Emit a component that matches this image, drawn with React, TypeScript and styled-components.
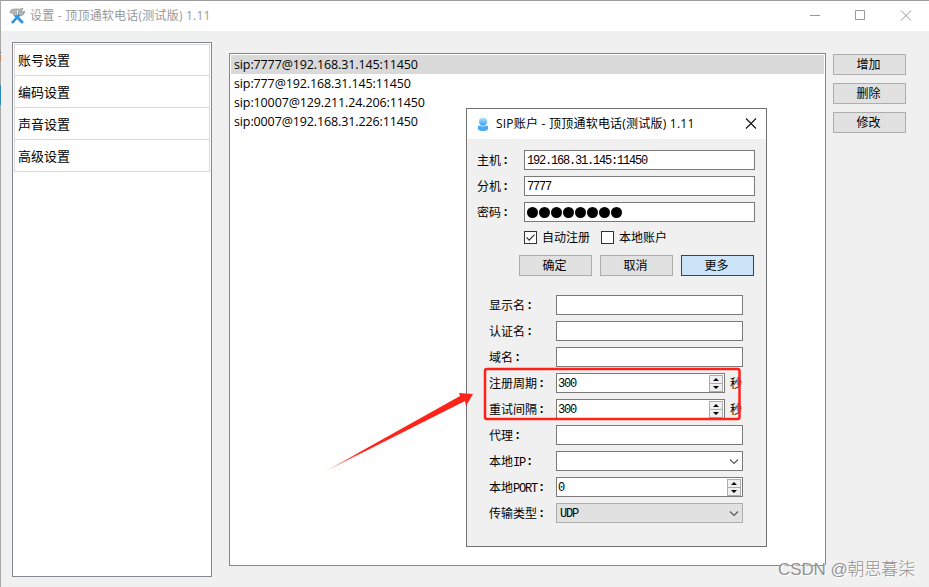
import React from "react";
import styled, { createGlobalStyle } from "styled-components";

const ui = '"Open Sans", "Noto Sans CJK SC", sans-serif';
const song = '"Liberation Mono", "Noto Sans CJK SC", monospace';

const GlobalStyle = createGlobalStyle`
  * { box-sizing: border-box; }
  body { margin: 0; background: #f0f0f0; overflow: hidden; }
`;

const Window = styled.div`
  position: relative;
  width: 929px;
  height: 587px;
  display: flex;
  flex-direction: column;
  background: #f0f0f0;
  border-top: 1px solid #9c9c9c;
  border-left: 1px solid #a9a9a9;
  color: #000;
  font: 12px/19px ${ui};
  white-space: nowrap;
`;

const TitleBar = styled.header`
  display: flex;
  align-items: center;
  height: 30px;
  flex: none;
  padding-left: 8px;
  background: #fff;
  color: #999;
`;

const TitleText = styled.span<{ $spacing?: number; $left?: number }>`
  flex: 1;
  font: 12px/20px ${ui};
  letter-spacing: ${(p) => p.$spacing ?? 0.22}px;
  margin-left: ${(p) => p.$left ?? 5}px;
`;

const Controls = styled.svg`
  width: 121px;
  height: 30px;
  flex: none;
`;

const Content = styled.main`
  display: flex;
  align-items: flex-start;
  padding: 11px 0 0 11px;
`;

const Sidebar = styled.nav`
  width: 200px;
  height: 535px;
  flex: none;
  padding: 1px;
  background: #fff;
  border: 1px solid #828790;
`;

const SideItem = styled.div`
  height: 32px;
  padding: 2px 0 0 3px;
  border: 1px solid #d9d9d9;
  border-top-width: 0;
  font: 13px/28px ${ui};
  &:first-child { padding-top: 1px; border-top-width: 1px; }
`;

const AccountList = styled.div`
  width: 597px;
  height: 513px;
  margin: 11px 7px 0 17px;
  flex: none;
  background: #fff;
  border: 1px solid #828790;
  padding: 1px;
`;

const Account = styled.div<{ $selected?: boolean }>`
  height: 19px;
  padding-left: 3px;
  font: 12.5px/20px ${ui};
  letter-spacing: -0.12px;
  background: ${(p) => (p.$selected ? "#d9d9d9" : "transparent")};
`;

const Actions = styled.div`
  display: flex;
  flex-direction: column;
  gap: 8px;
  margin-top: 12px;
`;

const Button = styled.button<{ $primary?: boolean }>`
  display: flex;
  justify-content: center;
  align-items: flex-start;
  width: 73px;
  height: 21px;
  padding: 3px 2px 0 0;
  border: 1px solid ${(p) => (p.$primary ? "#00549a" : "#adadad")};
  background: ${(p) => (p.$primary ? "#cce4f7" : "#e1e1e1")};
  color: #000;
  font: 12px/16px ${song};
`;

const Dialog = styled.section`
  position: absolute;
  left: 465px;
  top: 107px;
  width: 301px;
  height: 439px;
  background: #f0f0f0;
  border: 1px solid #707070;
  font: 12px/20px ${song};
`;

const DialogTitle = styled(TitleBar)`
  padding-left: 10px;
  color: #000;
`;

const Form = styled.div<{ $more?: boolean }>`
  display: grid;
  grid-template-columns: ${(p) => (p.$more ? "67px 187px" : "47px 231px")};
  grid-auto-rows: 20px;
  row-gap: 6px;
  padding: ${(p) => (p.$more ? "19px 0 0 22px" : "11px 0 0 10px")};
`;

const Label = styled.label`
  display: flex;
  padding-top: 2px;
`;

const Latin = styled.span`
  font: 12px/20px ${song};
  letter-spacing: -1.2px;
`;

const Colon = styled.span`
  width: 6px;
  padding-left: 1px;
  font: bold 12px/19px ${song};
`;

const Field = styled.div<{ $width?: number; $muted?: boolean }>`
  display: flex;
  align-items: center;
  justify-content: space-between;
  width: ${(p) => (p.$width ? `${p.$width}px` : "100%")};
  height: 20px;
  padding: 0 1px 0 2px;
  border: 1px solid ${(p) => (p.$muted ? "#adadad" : "#7a7a7a")};
  background: ${(p) => (p.$muted ? "#e1e1e1" : "#fff")};
`;

const Value = styled.span<{ $left?: number }>`
  padding-top: 2px;
  margin-left: ${(p) => p.$left ?? 0}px;
  font: 12px/16px ${song};
  letter-spacing: -1.2px;
`;

const FieldWithUnit = styled.div`
  display: flex;
  gap: 5px;
  overflow: hidden;
`;

const Unit = styled.span`
  padding-top: 2px;
`;

const Spacer = styled.span`
  flex: 1;
`;

const Checks = styled.div`
  display: flex;
  align-items: center;
  height: 13px;
  margin: 9px 0 0 57px;
`;

const CheckLabel = styled.label`
  margin: 4px 11px 0 5px;
  line-height: 13px;
`;

const DialogButtons = styled.div`
  display: flex;
  gap: 8px;
  margin: 11px 0 0 52px;
`;

const Art = styled.svg`
  display: block;
  flex: none;
`;

const Annotation = styled.svg`
  position: absolute;
  left: -1px;
  top: -1px;
  pointer-events: none;
`;

const Watermark = styled.div`
  position: absolute;
  left: 777px;
  top: 557px;
  font: 17px/24px "Liberation Sans", "Noto Sans CJK SC", sans-serif;
  font-weight: 300;
  letter-spacing: -0.1px;
  color: #929292;
  text-shadow: 1px 1px 0 #fff;
`;

const ToolsIcon = () => (
  <Art width="16" height="16" viewBox="0 0 16 16">
    <path d="M3 15 11 6" stroke="#258bd2" strokeWidth="2.6" />
    <path d="m6 7 7 7" stroke="#3298df" strokeWidth="3" strokeLinecap="round" />
    <path d="m1 5 1-3 3-1h5l-3 2 1 3-2 2-3-3Z" fill="#b5b8b9" stroke="#8f9699" strokeWidth=".7" />
    <path d="m10 7-1-3 2-3 3-.5-2 2.5 1 1 2.5-1-.5 3-3 2Z" fill="#aeb3b5" stroke="#858e92" strokeWidth=".7" />
    <path d="m2.5 14 4-4.5" stroke="#75c3f4" />
  </Art>
);

const PersonIcon = () => (
  <Art width="12" height="15" viewBox="0 0 12 15">
    <defs>
      <linearGradient id="person" x2="0" y2="1">
        <stop stopColor="#bce8fc" />
        <stop offset="1" stopColor="#369df0" />
      </linearGradient>
    </defs>
    <path d="M1 9Q6 7 11 9V12Q10 14 6 14T1 12Z" fill="#4aaaf4" />
    <circle cx="6" cy="4.5" r="4" fill="url(#person)" />
    <path d="M2 8Q6 10.5 10 8" fill="none" stroke="#dff5ff" strokeWidth=".8" />
  </Art>
);

const CloseIcon = () => (
  <Art width="31" height="29" viewBox="0 0 31 29">
    <path d="m11 8.5 10 10m0-10-10 10" stroke="#111" strokeWidth="1.1" />
  </Art>
);

const Checkbox = ({ checked = false }) => (
  <Art width="13" height="13">
    <rect x=".5" y=".5" width="12" height="12" fill="#fff" stroke="#333" />
    {checked && <path d="m2.5 6.3 2.7 2.8 5.3-5.4" fill="none" stroke="#333" strokeWidth="1.2" />}
  </Art>
);

const Spinner = () => (
  <Art width="14" height="17">
    <rect x=".5" y=".5" width="13" height="8" fill="#f0f0f0" stroke="#acacac" />
    <rect x=".5" y="8.5" width="13" height="8" fill="#f0f0f0" stroke="#acacac" />
    <path d="M4 6h6L7 3ZM4 11h6l-3 3Z" fill="#000" />
  </Art>
);

const Chevron = () => (
  <Art width="14" height="18">
    <path d="m3 7.5 4 4 4-4" fill="none" stroke="#555" strokeWidth="1.1" />
  </Art>
);

const PasswordDots = () => (
  <Art width="96" height="18">
    {Array.from({ length: 8 }, (_, i) => (
      <circle key={i} cx={5.5 + i * 12} cy="9.5" r="5.5" />
    ))}
  </Art>
);

const FormLabel = ({ text, latin }: { text: string; latin?: string }) => (
  <Label>
    {text}
    {latin && <Latin>{latin}</Latin>}
    <Colon>:</Colon>
  </Label>
);

const sections = ["账号设置", "编码设置", "声音设置", "高级设置"];
const accounts = [
  "sip:7777@192.168.31.145:11450",
  "sip:777@192.168.31.145:11450",
  "sip:10007@129.211.24.206:11450",
  "sip:0007@192.168.31.226:11450",
];

export default function App() {
  return (
    <Window>
      <GlobalStyle />
      <TitleBar>
        <ToolsIcon />
        <TitleText>设置 - 顶顶通软电话(测试版) 1.11</TitleText>
        <Controls>
          <path d="M2 14.5h10M47.5 9.5h9v9h-9ZM93 9.5l10 10m0-10-10 10" fill="none" stroke="#999" />
        </Controls>
      </TitleBar>
      <Content>
        <Sidebar>
          {sections.map((name) => (
            <SideItem key={name}>{name}</SideItem>
          ))}
        </Sidebar>
        <AccountList>
          {accounts.map((account, i) => (
            <Account key={account} $selected={i === 0}>{account}</Account>
          ))}
        </AccountList>
        <Actions>
          <Button>增加</Button>
          <Button>删除</Button>
          <Button>修改</Button>
        </Actions>
      </Content>

      <Dialog>
        <DialogTitle>
          <PersonIcon />
          <TitleText $left={7}>SIP账户 - 顶顶通软电话(测试版) 1.11</TitleText>
          <CloseIcon />
        </DialogTitle>
        <Form>
          <FormLabel text="主机" />
          <Field><Value>192.168.31.145:11450</Value></Field>
          <FormLabel text="分机" />
          <Field><Value>7777</Value></Field>
          <FormLabel text="密码" />
          <Field><PasswordDots /></Field>
        </Form>
        <Checks>
          <Checkbox checked />
          <CheckLabel>自动注册</CheckLabel>
          <Checkbox />
          <CheckLabel>本地账户</CheckLabel>
        </Checks>
        <DialogButtons>
          <Button>确定</Button>
          <Button>取消</Button>
          <Button $primary>更多</Button>
        </DialogButtons>
        <Form $more>
          <FormLabel text="显示名" />
          <Field />
          <FormLabel text="认证名" />
          <Field />
          <FormLabel text="域名" />
          <Field />
          <FormLabel text="注册周期" />
          <FieldWithUnit>
            <Field $width={169}><Value $left={-1}>300</Value><Spinner /></Field>
            <Unit>秒</Unit>
          </FieldWithUnit>
          <FormLabel text="重试间隔" />
          <FieldWithUnit>
            <Field $width={169}><Value $left={-1}>300</Value><Spinner /></Field>
            <Unit>秒</Unit>
          </FieldWithUnit>
          <FormLabel text="代理" />
          <Field />
          <FormLabel text="本地" latin="IP" />
          <Field><Spacer /><Chevron /></Field>
          <FormLabel text="本地" latin="PORT" />
          <Field><Value $left={-1}>0</Value><Spinner /></Field>
          <FormLabel text="传输类型" />
          <Field $muted><Value $left={1}>UDP</Value><Chevron /></Field>
        </Form>
      </Dialog>

      <Annotation width="929" height="587">
        <defs>
          <linearGradient id="arrow">
            <stop stopColor="#ff2419" stopOpacity=".3" />
            <stop offset=".25" stopColor="#ff2419" />
          </linearGradient>
        </defs>
        <path d="M0 52h1v1H0Z" fill="#555" />
        <path d="M0 55h1v6H0Z" fill="#b9855f" />
        <path d="M0 85h1v20H0Z" fill="#2a86b8" />
        <path d="M324 472 460 396 459 393 473 394 466 406 465 401Z" fill="url(#arrow)" />
        <rect x="485" y="369" width="254.5" height="50" rx="2" fill="none" stroke="#ff2118" strokeWidth="2.5" />
      </Annotation>
      <Watermark>CSDN @朝思暮柒</Watermark>
    </Window>
  );
}
